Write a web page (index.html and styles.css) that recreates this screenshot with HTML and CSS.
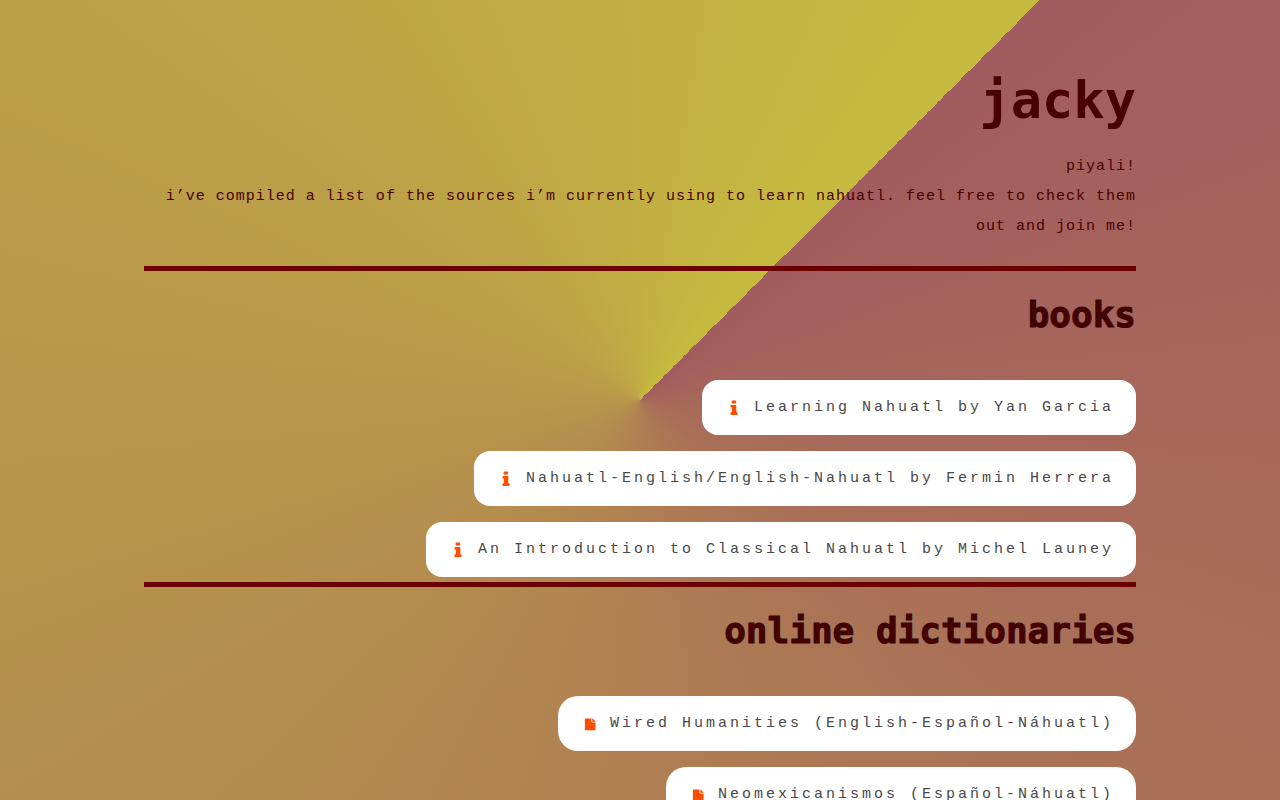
FILE: index.html
```html
<!DOCTYPE html>
<html lang="en">
<head>
<meta charset="utf-8">
<meta name="viewport" content="width=device-width, initial-scale=1">
<title>jacky</title>
<link rel="stylesheet" href="styles.css">
</head>
<body>
<svg class="symbols" aria-hidden="true">
  <symbol id="info" viewBox="0 0 16 16"><path d="M6 .5h3.800q.4 0 .4.4v2.200q0 .4-.4.4H6q-.4 0-.4-.4V.9q0-.4.400-.4zM5 5h4.800q.5 0 .5.500v6.700H11q.5 0 .5.500v1.700q0 .5-.5.500H5q-.5 0-.5-.5v-1.700q0-.5.5-.5h.8V7.500H5q-.5 0-.5-.5V5.500q0-.5.500-.5z"/></symbol>
  <symbol id="file" viewBox="0 0 16 16"><path d="M3.700 2.500h5.600v3.200q0 .8.8.8h3.400v7q0 .8-.8.8h-9q-.8 0-.8-.8V3.300q0-.8.8-.8zM10.200 2.500q.4 0 .7.300l2.300 2.200q.300.300.300.700h-3.300z"/></symbol>
</svg>
<main class="page">
  <header class="intro">
    <h1>jacky</h1>
    <p>piyali!<br>i’ve compiled a list of the sources i’m currently using to learn nahuatl. feel free to check them out and join me!</p>
  </header>
  <section class="group">
    <h2>books</h2>
    <ul class="links">
      <li><a href="#"><svg class="icon" aria-hidden="true"><use href="#info"/></svg><span>Learning Nahuatl by Yan Garcia</span></a></li>
      <li><a href="#"><svg class="icon" aria-hidden="true"><use href="#info"/></svg><span>Nahuatl-English/English-Nahuatl by Fermin Herrera</span></a></li>
      <li><a href="#"><svg class="icon" aria-hidden="true"><use href="#info"/></svg><span>An Introduction to Classical Nahuatl by Michel Launey</span></a></li>
    </ul>
  </section>
  <section class="group">
    <h2>online dictionaries</h2>
    <ul class="links links-round">
      <li><a href="#"><svg class="icon" aria-hidden="true"><use href="#file"/></svg><span>Wired Humanities (English-Español-Náhuatl)</span></a></li>
      <li><a href="#"><svg class="icon" aria-hidden="true"><use href="#file"/></svg><span>Neomexicanismos (Español-Náhuatl)</span></a></li>
    </ul>
  </section>
</main>
</body>
</html>
```
FILE: styles.css
```css
* { box-sizing: border-box; }
html { scrollbar-width: none; }
body {
  margin: 0;
  min-height: 100vh;
  background: conic-gradient(from 45deg at center, #a25b5e, #c6bb3f) fixed;
  color: #480000;
  font-family: "Liberation Mono", monospace;
  font-size: 15px;
}
.symbols { position: absolute; width: 0; height: 0; }
.page { padding: 64px 144px; text-align: right; }
h1, h2 { margin: 0; font-family: "DejaVu Sans Mono", monospace; font-weight: 700; }
h1 { font-size: 52px; line-height: 72px; }
h2 {
  padding: 20px 0 41px;
  font-size: 36px;
  line-height: 48px;
  -webkit-text-stroke: 1px #300808;
}
.intro { padding-bottom: 24px; }
.intro p {
  margin: 16px 0 0;
  line-height: 30px;
  letter-spacing: 1px;
}
.group { border-top: 5px solid #6b0000; padding-bottom: 5px; }
.links {
  display: flex;
  flex-direction: column;
  align-items: flex-end;
  gap: 16px;
  margin: 0;
  padding: 0;
  list-style: none;
}
.links a {
  display: flex;
  align-items: center;
  gap: 12px;
  padding: 16px 22px 16px 24px;
  border-radius: 16px;
  background: #fff;
  color: #484848;
  line-height: 22px;
  letter-spacing: 3px;
  text-decoration: none;
}
.links-round a { border-radius: 20px; }
.links span { padding-top: 1px; }
.icon { flex: none; width: 16px; height: 16px; fill: #ff4d00; }
```
